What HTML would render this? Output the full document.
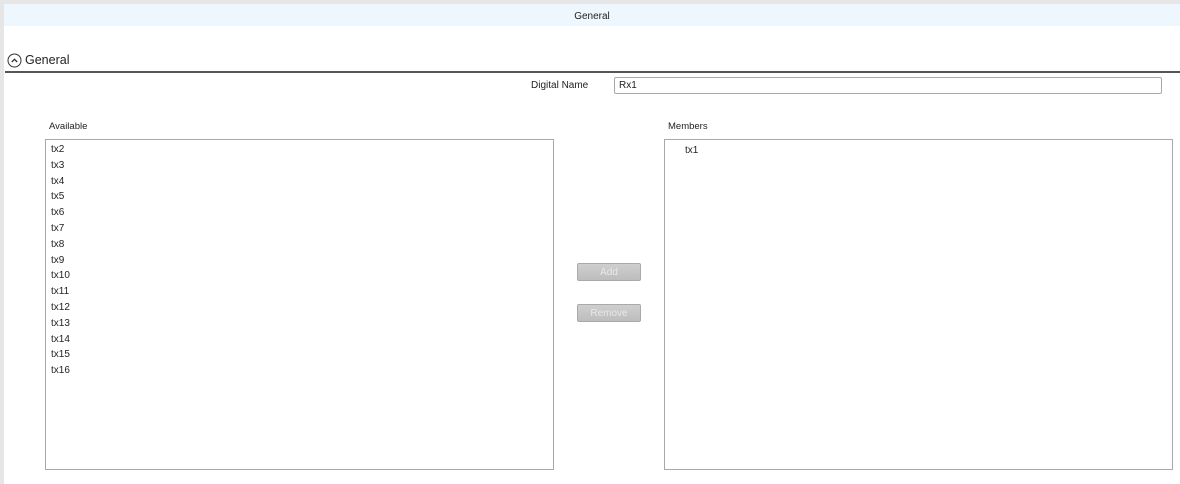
<!DOCTYPE html>
<html><head><style>
body{margin:0;width:1180px;height:484px;background:#fff;font-family:"Liberation Sans",sans-serif;font-size:10px;color:#222;position:relative;overflow:hidden}
div{position:absolute;box-sizing:border-box}
.box{border:1px solid #a8a8a8;background:#fff}
.btn{width:64px;height:18px;border:1px solid #aaa;border-radius:2px;background:linear-gradient(#cfcfcf,#bdbdbd);color:#e8e8e8;text-align:center;line-height:18px;font-size:10px}
.it{left:5px;line-height:15.8px}
</style></head><body>
<div style="left:0;top:0;width:1180px;height:4px;background:#e6e6e6"></div>
<div style="left:0;top:0;width:4px;height:484px;background:#e6e6e6"></div>
<div style="left:4px;top:4px;width:1176px;height:22px;background:#eef6fe;text-align:center;line-height:26px;font-size:10px">General</div>
<svg style="position:absolute;left:7px;top:53px" width="15" height="15"><circle cx="7.5" cy="7.5" r="6.5" fill="none" stroke="#333" stroke-width="1"/><path d="M4.8 9 L7.5 6.3 L10.2 9" fill="none" stroke="#333" stroke-width="1.3"/></svg>
<div style="left:25px;top:53px;font-size:12.5px;color:#222">General</div>
<div style="left:5px;top:71px;width:1175px;height:2px;background:#555"></div>
<div style="left:531px;top:80px">Digital Name</div>
<div class="box" style="left:614px;top:77px;width:548px;height:17px;border-radius:2px;padding-left:4px;line-height:15px">Rx1</div>
<div style="left:49px;top:121px;font-size:9.5px">Available</div>
<div style="left:668px;top:121px;font-size:9.5px">Members</div>
<div class="box" style="left:45px;top:139px;width:509px;height:331px;padding-top:2px">
<div class="it" style="top:2px">tx2</div><div class="it" style="top:17.8px">tx3</div><div class="it" style="top:33.6px">tx4</div><div class="it" style="top:49.4px">tx5</div><div class="it" style="top:65.2px">tx6</div><div class="it" style="top:81px">tx7</div><div class="it" style="top:96.8px">tx8</div><div class="it" style="top:112.6px">tx9</div><div class="it" style="top:128.4px">tx10</div><div class="it" style="top:144.2px">tx11</div><div class="it" style="top:160px">tx12</div><div class="it" style="top:175.8px">tx13</div><div class="it" style="top:191.6px">tx14</div><div class="it" style="top:207.4px">tx15</div><div class="it" style="top:223.2px">tx16</div>
</div>
<div class="box" style="left:664px;top:139px;width:509px;height:331px">
<div class="it" style="left:20px;top:3px">tx1</div>
</div>
<div class="btn" style="left:577px;top:263px">Add</div>
<div class="btn" style="left:577px;top:304px">Remove</div>
</body></html>
